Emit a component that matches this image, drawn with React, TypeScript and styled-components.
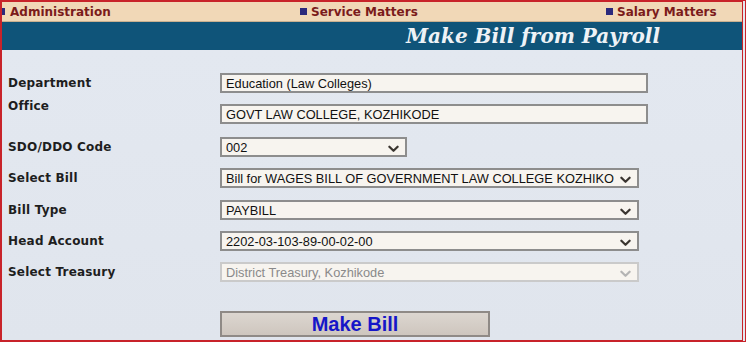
import styled, { createGlobalStyle } from 'styled-components';

const GlobalStyle = createGlobalStyle`
  html, body {
    margin: 0;
    padding: 0;
    background: #ffffff;
  }
`;

interface FieldType {
  label: string;
  value: string;
  kind: 'input' | 'select';
  width: number;
  disabled?: boolean;
  top?: boolean;
  gap: number;
}

const fields: FieldType[] = [
  { label: 'Department', value: 'Education (Law Colleges)', kind: 'input', width: 428, gap: 0 },
  { label: 'Office', value: 'GOVT LAW COLLEGE, KOZHIKODE', kind: 'input', width: 428, top: true, gap: 11 },
  { label: 'SDO/DDO Code', value: '002', kind: 'select', width: 187, gap: 13 },
  { label: 'Select Bill', value: 'Bill for WAGES BILL OF GOVERNMENT LAW COLLEGE KOZHIKO', kind: 'select', width: 419, gap: 11 },
  { label: 'Bill  Type', value: 'PAYBILL', kind: 'select', width: 419, gap: 12 },
  { label: 'Head Account', value: '2202-03-103-89-00-02-00', kind: 'select', width: 419, gap: 11 },
  { label: 'Select Treasury', value: 'District Treasury, Kozhikode', kind: 'select', width: 419, disabled: true, gap: 11 },
];

function Chevron({ disabled }: { disabled?: boolean }) {
  return (
    <ChevronIcon viewBox="0 0 12 8" disabled={disabled}>
      <path d="M1.5 1.5 L6 6 L10.5 1.5" fill="none" strokeWidth="2.4" strokeLinecap="round" strokeLinejoin="round" />
    </ChevronIcon>
  );
}

export default function App() {
  return (
    <>
      <GlobalStyle />
      <Frame>
        <Nav>
          <NavItem narrow>Administration</NavItem>
          <NavItem>Service Matters</NavItem>
          <NavItem>Salary Matters</NavItem>
        </Nav>
        <Header>
          <Title>Make Bill from Payroll</Title>
        </Header>
        <Body>
          {fields.map((f) => (
            <Row key={f.label} gap={f.gap}>
              <Label top={f.top}>{f.label}</Label>
              <Field width={f.width} disabled={f.disabled}>
                <FieldText>{f.value}</FieldText>
                {f.kind === 'select' && <Chevron disabled={f.disabled} />}
              </Field>
            </Row>
          ))}
          <ButtonRow>
            <MakeButton>Make Bill</MakeButton>
          </ButtonRow>
        </Body>
      </Frame>
    </>
  );
}

const Frame = styled.div`
  width: 746px;
  height: 342px;
  box-sizing: border-box;
  border: 2px solid #c8232a;
  border-right: 4px double #c8232a;
  display: flex;
  flex-direction: column;
  background: #e2e7ef;
  overflow: hidden;
`;

const Nav = styled.div`
  height: 19px;
  background: #f1d8b7;
  border-bottom: 1px solid #c9b090;
  display: grid;
  grid-template-columns: 298px 306px auto;
  align-items: center;
  font-family: 'DejaVu Sans', Verdana, sans-serif;
  font-size: 12px;
  font-weight: 700;
  color: #7b1b1b;
`;

const NavItem = styled.span<{ narrow?: boolean }>`
  display: flex;
  align-items: center;
  gap: ${({ narrow }) => (narrow ? '5px' : '4px')};
  &::before {
    content: '';
    width: ${({ narrow }) => (narrow ? '3px' : '7px')};
    height: 7px;
    background: #2c2a7c;
  }
`;

const Header = styled.div`
  height: 28px;
  background: #0f5479;
  display: flex;
  align-items: center;
  justify-content: flex-end;
  padding-right: 82px;
`;

const Title = styled.div`
  font-family: 'DejaVu Serif', Georgia, serif;
  font-style: italic;
  font-weight: 700;
  font-size: 20px;
  color: #eef2f6;
`;

const Body = styled.div`
  flex: 1;
  padding: 23px 0 0 6px;
  background: linear-gradient(180deg, #e3e8f0 0%, #e0e5ed 100%);
  display: flex;
  flex-direction: column;
`;

const Row = styled.div<{ gap: number }>`
  display: grid;
  grid-template-columns: 212px auto;
  height: 20px;
  margin-top: ${({ gap }) => gap}px;
`;

const Label = styled.div<{ top?: boolean }>`
  font-family: 'DejaVu Sans', Verdana, sans-serif;
  font-weight: 700;
  font-size: 12px;
  letter-spacing: 0.2px;
  color: #1e1e1e;
  display: flex;
  align-items: ${({ top }) => (top ? 'flex-start' : 'center')};
  margin-top: ${({ top }) => (top ? '-5px' : '0')};
`;

const Field = styled.div<{ width: number; disabled?: boolean }>`
  width: ${({ width }) => width}px;
  height: 20px;
  box-sizing: border-box;
  background: #f7f4ef;
  border: 2px solid ${({ disabled }) => (disabled ? '#cacaca' : '#8d8d8d')};
  display: flex;
  align-items: center;
  padding: 0 6px 0 4px;
  gap: 5px;
  font-family: 'Liberation Sans', Arial, sans-serif;
  font-size: 12.8px;
  color: ${({ disabled }) => (disabled ? '#8a8a8a' : '#111111')};
`;

const FieldText = styled.span`
  flex: 1;
  white-space: nowrap;
  overflow: hidden;
`;

const ChevronIcon = styled.svg<{ disabled?: boolean }>`
  width: 11px;
  height: 8px;
  margin-top: 4px;
  flex-shrink: 0;
  stroke: ${({ disabled }) => (disabled ? '#b4b4b4' : '#3a3530')};
`;

const ButtonRow = styled.div`
  margin-top: 29px;
  padding-left: 212px;
`;

const MakeButton = styled.button`
  width: 270px;
  height: 26px;
  background: linear-gradient(180deg, #dcd6d0 0%, #cec6be 100%);
  border: 2px solid #8f8a86;
  font-family: 'Liberation Sans', Arial, sans-serif;
  font-size: 20px;
  font-weight: 700;
  color: #1616c8;
  padding: 0;
  line-height: 22px;
`;
